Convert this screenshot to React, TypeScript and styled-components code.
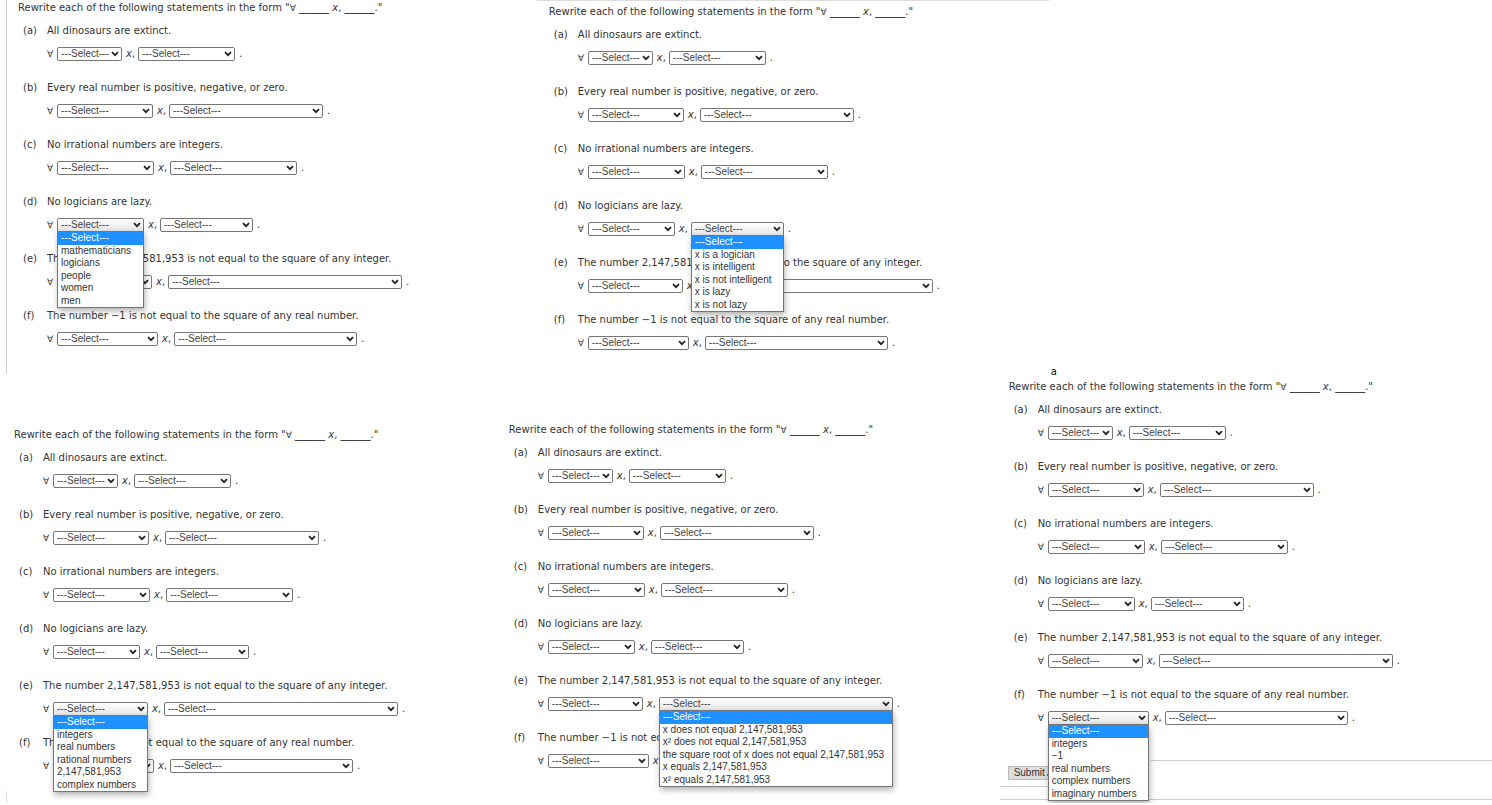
import React from "react";
import styled, { createGlobalStyle, css } from "styled-components";

const GlobalStyle = createGlobalStyle`
  *, *::before, *::after { box-sizing: border-box; }
  body {
    margin: 0;
    background: #fff;
    color: #333;
    font-family: Verdana, "DejaVu Sans", sans-serif;
    font-size: 10px;
    line-height: 14px;
  }
`;

const Page = styled.main`
  display: grid;
  grid-template-columns: 67fr 33fr;
`;

const LeftArea = styled.div`
  min-width: 0;
`;

const TopBand = styled.div`
  display: grid;
  grid-template-columns: 53fr 47fr;
`;

const BottomBand = styled.div`
  display: grid;
  grid-template-columns: 1fr 1fr;
`;

const FramedCell = styled.div`
  margin-left: 6px;
  padding: 0 0 28px 11px;
  border-left: 1px solid #ccc;
`;

const RuledCell = styled.div`
  margin: 0 -49px 0 7px;
  padding: 3px 0 0 12px;
  border-top: 1px solid #ddd;
`;

const LowerLeftCell = styled.div`
  padding: 53px 0 0 14px;
`;

const LowerMiddleCell = styled.div`
  padding: 48px 0 0 9px;
`;

const CellTail = styled.div`
  height: 12px;
  margin: 18px 0 0 -8px;
  border-left: 1px solid #ddd;
`;

const RightArea = styled.div`
  padding-top: 364px;
  min-width: 0;
`;

const RightBody = styled.div`
  padding-left: 9px;
`;

const Note = styled.p`
  margin: 0;
  padding-left: 42px;
  color: #000;
  line-height: 15px;
`;

const Prompt = styled.h2`
  margin: 0;
  padding-top: 1px;
  font-size: 10px;
  font-weight: 400;
  white-space: nowrap;
`;

const Blank = styled.span`
  font-size: 12px;
  line-height: 12px;
`;

const ForAll = styled.span`
  font-size: 9px;
`;

const Questions = styled.ol`
  display: flex;
  flex-direction: column;
  gap: 20px;
  margin: 9px 0 0;
  padding: 0 0 0 5px;
  list-style: none;
`;

const Question = styled.li`
  display: grid;
  grid-template-columns: 24px 1fr;
  row-gap: 9px;
  white-space: nowrap;
`;

const Formula = styled.div`
  grid-column: 2;
  display: flex;
  align-items: center;
  height: 14px;
`;

const Quantifier = styled(ForAll)`
  width: 10px;
`;

const Variable = styled.span`
  width: 16px;
  padding-left: 4px;
`;

const Period = styled.span`
  padding-left: 4px;
`;

const SelectBox = styled.div<{ $width: number }>`
  position: relative;
  width: ${(p) => p.$width}px;
  height: 14px;
`;

const Select = styled.select<{ $open: boolean }>`
  display: block;
  appearance: none;
  width: 100%;
  height: 14px;
  margin: 0;
  padding: 0 3px;
  border: 1px solid #767676;
  border-radius: 2px;
  background: #fff;
  color: #444;
  font: 10px/12px Arial, "Liberation Sans", sans-serif;
  ${(p) =>
    p.$open &&
    css`
      border-radius: 2px 2px 0 0;
      background: linear-gradient(#fff, #e6e6e6);
    `}
`;

const Arrow = styled.svg`
  position: absolute;
  top: 4px;
  right: 3px;
  width: 8px;
  height: 6px;
  pointer-events: none;
`;

const Menu = styled.ul`
  position: absolute;
  z-index: 1;
  top: 13px;
  left: 0;
  right: 0;
  margin: 0;
  padding: 0;
  border: 1px solid #767676;
  background: #fff;
  box-shadow: 1px 3px 6px rgba(0, 0, 0, 0.3);
  font: 10px/12px Arial, "Liberation Sans", sans-serif;
  list-style: none;
`;

const MenuItem = styled.li`
  height: 12px;
  padding-left: 3px;
  &:nth-child(odd) {
    height: 13px;
  }
  &[aria-selected="true"] {
    height: 13px;
    background: #1e90ff;
    color: #fff;
  }
`;

const Divider = styled.div`
  height: 1px;
  margin: 35px 0 5px 151px;
  background: #ccc;
`;

const ShortDivider = styled.div`
  width: 50px;
  height: 1px;
  margin: 6px 0 12px;
  background: #ccc;
`;

const FullDivider = styled.div`
  height: 1px;
  background: #ccc;
`;

const SubmitButton = styled.button`
  display: block;
  height: 14px;
  margin: 0 0 0 8px;
  padding: 0 5px;
  border: 1px solid #bbb;
  background: #ddd;
  color: #333;
  font: 10px/12px Arial, "Liberation Sans", sans-serif;
`;

interface Item {
  letter: string;
  text: string;
  widths: [number, number];
}

const PLACEHOLDER = "---Select---";

const ITEMS: Item[] = [
  { letter: "a", text: "All dinosaurs are extinct.", widths: [65, 97] },
  { letter: "b", text: "Every real number is positive, negative, or zero.", widths: [96, 154] },
  { letter: "c", text: "No irrational numbers are integers.", widths: [97, 127] },
  { letter: "d", text: "No logicians are lazy.", widths: [87, 93] },
  {
    letter: "e",
    text: "The number 2,147,581,953 is not equal to the square of any integer.",
    widths: [95, 234],
  },
  {
    letter: "f",
    text: "The number −1 is not equal to the square of any real number.",
    widths: [101, 183],
  },
];

interface OpenMenu {
  letter: string;
  slot: number;
  options: string[];
}

interface DropDownProps {
  width: number;
  label: string;
  options?: string[];
}

function DropDown({ width, label, options }: DropDownProps) {
  return (
    <SelectBox $width={width}>
      <Select $open={!!options} aria-label={label} defaultValue={PLACEHOLDER}>
        <option>{PLACEHOLDER}</option>
      </Select>
      <Arrow viewBox="0 0 8 6" aria-hidden="true">
        <path d="M1 1.2 4 4.2 7 1.2" fill="none" stroke="#222" strokeWidth="1.8" />
      </Arrow>
      {options && (
        <Menu role="listbox" aria-label={label}>
          {[PLACEHOLDER, ...options].map((option, i) => (
            <MenuItem key={option} role="option" aria-selected={i === 0}>
              {option}
            </MenuItem>
          ))}
        </Menu>
      )}
    </SelectBox>
  );
}

function Exercise({ menu }: { menu: OpenMenu }) {
  const optionsFor = (letter: string, slot: number) =>
    menu.letter === letter && menu.slot === slot ? menu.options : undefined;

  return (
    <section>
      <Prompt>
        Rewrite each of the following statements in the form "<ForAll>∀</ForAll>{" "}
        <Blank>_____</Blank> <i>x</i>, <Blank>_____</Blank>."
      </Prompt>
      <Questions>
        {ITEMS.map(({ letter, text, widths }) => (
          <Question key={letter}>
            <span>({letter})</span>
            <span>{text}</span>
            <Formula>
              <Quantifier>∀</Quantifier>
              <DropDown
                width={widths[0]}
                label={`(${letter}) domain`}
                options={optionsFor(letter, 0)}
              />
              <Variable>
                <i>x</i>,
              </Variable>
              <DropDown
                width={widths[1]}
                label={`(${letter}) predicate`}
                options={optionsFor(letter, 1)}
              />
              <Period>.</Period>
            </Formula>
          </Question>
        ))}
      </Questions>
    </section>
  );
}

const PEOPLE: OpenMenu = {
  letter: "d",
  slot: 0,
  options: ["mathematicians", "logicians", "people", "women", "men"],
};

const TRAITS: OpenMenu = {
  letter: "d",
  slot: 1,
  options: ["x is a logician", "x is intelligent", "x is not intelligent", "x is lazy", "x is not lazy"],
};

const NUMBERS: OpenMenu = {
  letter: "e",
  slot: 0,
  options: ["integers", "real numbers", "rational numbers", "2,147,581,953", "complex numbers"],
};

const EQUALITIES: OpenMenu = {
  letter: "e",
  slot: 1,
  options: [
    "x does not equal 2,147,581,953",
    "x² does not equal 2,147,581,953",
    "the square root of x does not equal 2,147,581,953",
    "x equals 2,147,581,953",
    "x² equals 2,147,581,953",
  ],
};

const NUMBER_KINDS: OpenMenu = {
  letter: "f",
  slot: 0,
  options: ["integers", "−1", "real numbers", "complex numbers", "imaginary numbers"],
};

export default function App() {
  return (
    <>
      <GlobalStyle />
      <Page>
        <LeftArea>
          <TopBand>
            <FramedCell>
              <Exercise menu={PEOPLE} />
            </FramedCell>
            <RuledCell>
              <Exercise menu={TRAITS} />
            </RuledCell>
          </TopBand>
          <BottomBand>
            <LowerLeftCell>
              <Exercise menu={NUMBERS} />
              <CellTail />
            </LowerLeftCell>
            <LowerMiddleCell>
              <Exercise menu={EQUALITIES} />
            </LowerMiddleCell>
          </BottomBand>
        </LeftArea>
        <RightArea>
          <RightBody>
            <Note>a</Note>
            <Exercise menu={NUMBER_KINDS} />
          </RightBody>
          <Divider />
          <SubmitButton type="submit">Submit Answer</SubmitButton>
          <ShortDivider />
          <FullDivider />
        </RightArea>
      </Page>
    </>
  );
}
